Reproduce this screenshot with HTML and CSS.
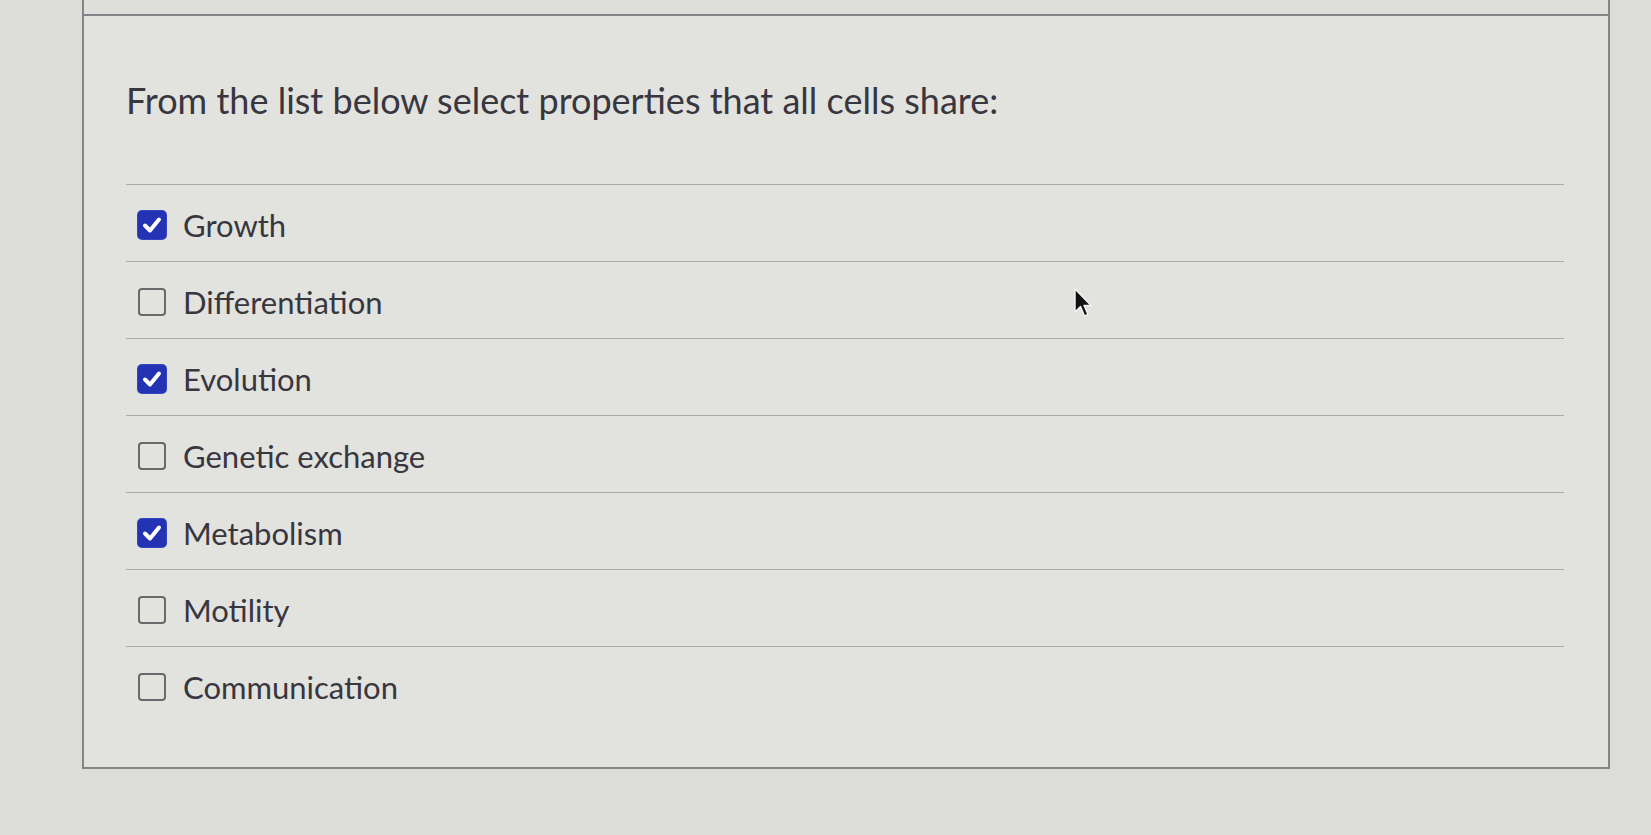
FILE: index.html
```html
<!DOCTYPE html>
<html lang="en">
<head>
    <meta charset="UTF-8">
    <title>Quiz question</title>
    <link rel="stylesheet" href="styles.css">
</head>
<body>
    <div class="prevItem"></div>
    <div class="question">
        <div class="questionText">From the list below select properties that all cells share:</div>
        <div class="answers">
            <label class="answer">
                <span class="box checked">
                    <svg viewBox="0 0 28 28" width="28" height="28"><path d="M7 14.5 L12 19.5 L21 8.5" fill="none" stroke="#fff" stroke-width="4" stroke-linecap="round" stroke-linejoin="round"/></svg>
                </span>
                <span class="answerText">Growth</span>
            </label>
            <label class="answer">
                <span class="box"></span>
                <span class="answerText">Differentiation</span>
            </label>
            <label class="answer">
                <span class="box checked">
                    <svg viewBox="0 0 28 28" width="28" height="28"><path d="M7 14.5 L12 19.5 L21 8.5" fill="none" stroke="#fff" stroke-width="4" stroke-linecap="round" stroke-linejoin="round"/></svg>
                </span>
                <span class="answerText">Evolution</span>
            </label>
            <label class="answer">
                <span class="box"></span>
                <span class="answerText">Genetic exchange</span>
            </label>
            <label class="answer">
                <span class="box checked">
                    <svg viewBox="0 0 28 28" width="28" height="28"><path d="M7 14.5 L12 19.5 L21 8.5" fill="none" stroke="#fff" stroke-width="4" stroke-linecap="round" stroke-linejoin="round"/></svg>
                </span>
                <span class="answerText">Metabolism</span>
            </label>
            <label class="answer">
                <span class="box"></span>
                <span class="answerText">Motility</span>
            </label>
            <label class="answer">
                <span class="box"></span>
                <span class="answerText">Communication</span>
            </label>
        </div>
    </div>
    <!-- mouse pointer over the page -->
    <svg class="cursor" viewBox="0 0 20 32" width="20" height="32">
        <path d="M2 1 L2 24 L7.5 18.5 L11.5 28 L15 26.5 L11 17.5 L18 17.5 Z" fill="#111" stroke="#f4f4f4" stroke-width="1.4" stroke-linejoin="round"/>
    </svg>
</body>
</html>
```

FILE: styles.css
```css
*{
    box-sizing: border-box;
}
body{
    margin: 0;
    background: #dcdcd8;
    font-family: Lato, "Open Sans", sans-serif;
    color: #38363e;
    position: relative;
    height: 835px;
    overflow: hidden;
}
.prevItem{
    margin-left: 82px;
    width: 1528px;
    height: 14px;
    border-left: 2px solid #848388;
    border-right: 2px solid #848388;
    background: #dfdfdb;
}
.question{
    margin-left: 82px;
    width: 1528px;
    height: 755px;
    border: 2px solid #848388;
    background: #e2e2de;
    padding: 63px 44px 0 42px;
}
.questionText{
    font-size: 36px;
    line-height: 42px;
    margin-bottom: 63px;
}
.answers{
    display: flex;
    flex-direction: column;
}
.answer{
    display: flex;
    align-items: center;
    gap: 17px;
    height: 77px;
    padding: 3px 0 0 12px;
    border-top: 1.5px solid #acaba8;
}
.answerText{
    font-size: 31px;
}
.box{
    width: 28px;
    height: 28px;
    border: 2px solid #69686c;
    border-radius: 4px;
    flex-shrink: 0;
}
.box.checked{
    border: none;
    background: #2333b4;
    box-shadow: 0 0 0 1px #3644c0;
}
.box svg{
    display: block;
}
.cursor{
    position: absolute;
    left: 1073px;
    top: 288px;
}
```
